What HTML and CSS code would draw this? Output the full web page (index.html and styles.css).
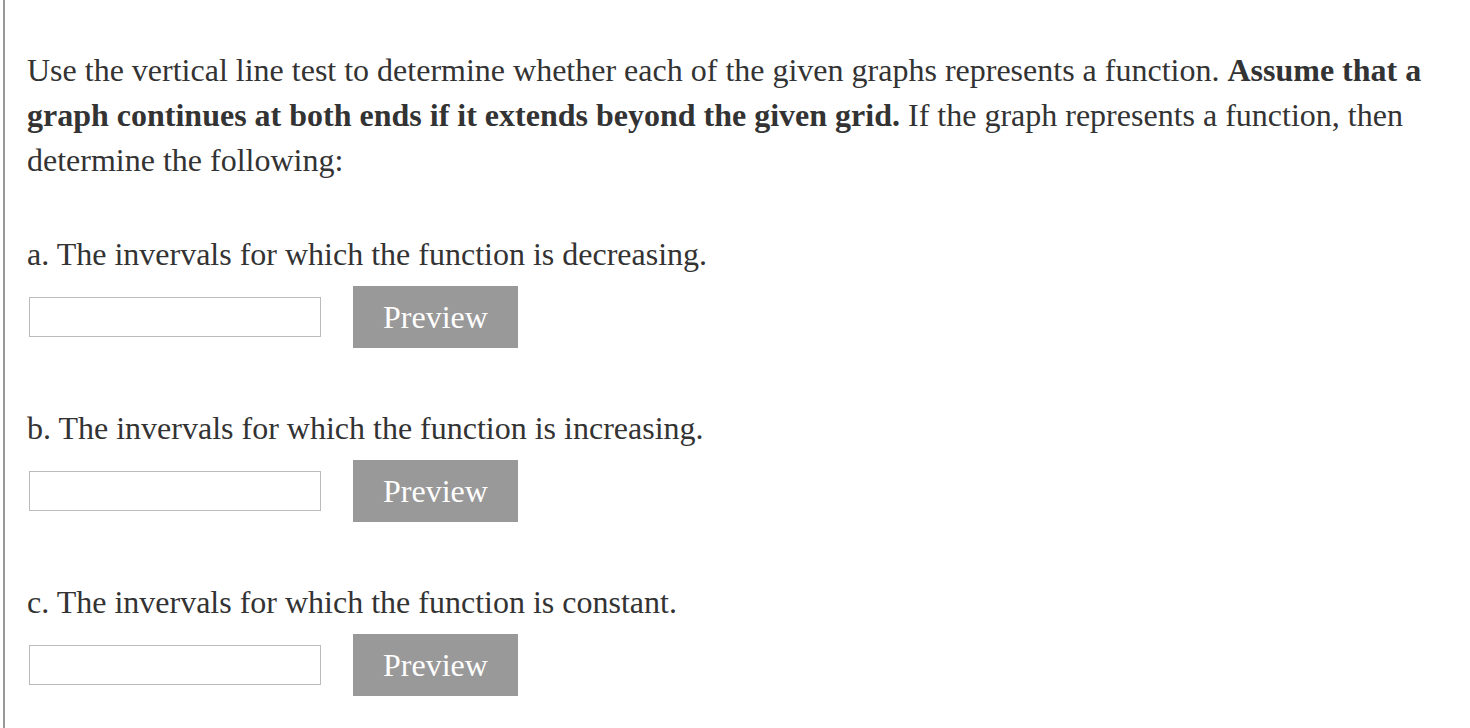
FILE: index.html
```html
<!DOCTYPE html>
<html>
<head>
<meta charset="utf-8">
<link rel="stylesheet" href="styles.css">
</head>
<body>
<div class="page">
  <p class="intro">Use the vertical line test to determine whether each of the given graphs represents a function. <b>Assume that a graph continues at both ends if it extends beyond the given grid.</b> If the graph represents a function, then determine the following:</p>
  <div class="part">
    <p class="label">a. The invervals for which the function is decreasing.</p>
    <div class="answer"><input class="box" type="text"><button class="preview">Preview</button></div>
  </div>
  <div class="part">
    <p class="label">b. The invervals for which the function is increasing.</p>
    <div class="answer"><input class="box" type="text"><button class="preview">Preview</button></div>
  </div>
  <div class="part">
    <p class="label">c. The invervals for which the function is constant.</p>
    <div class="answer"><input class="box" type="text"><button class="preview">Preview</button></div>
  </div>
</div>
</body>
</html>
```
FILE: styles.css
```css
html, body { margin: 0; padding: 0; background: #fff; }
body { font-family: "Liberation Serif", "Times New Roman", serif; color: #333; }
.page {
  margin-left: 3px;
  border-left: 2px solid #999;
  padding: 48px 40px 0 22px;
  min-height: 728px;
  box-sizing: border-box;
}
.intro { margin: 0 0 49px; font-size: 32px; line-height: 45px; }
.part + .part { margin-top: 58px; }
.label { margin: 0; font-size: 32px; line-height: 45px; }
.answer { display: flex; align-items: center; gap: 32px; margin-top: 9px; margin-left: 2px; }
.box {
  width: 292px; height: 40px; box-sizing: border-box;
  border: 1px solid #bbb; border-radius: 0; padding: 0; margin: 0;
  background: #fff;
}
.preview {
  width: 165px; height: 62px; border: none; margin: 0; padding: 0;
  background: #999; color: #fff;
  font-family: "Liberation Serif", "Times New Roman", serif; font-size: 32px;
}
```
